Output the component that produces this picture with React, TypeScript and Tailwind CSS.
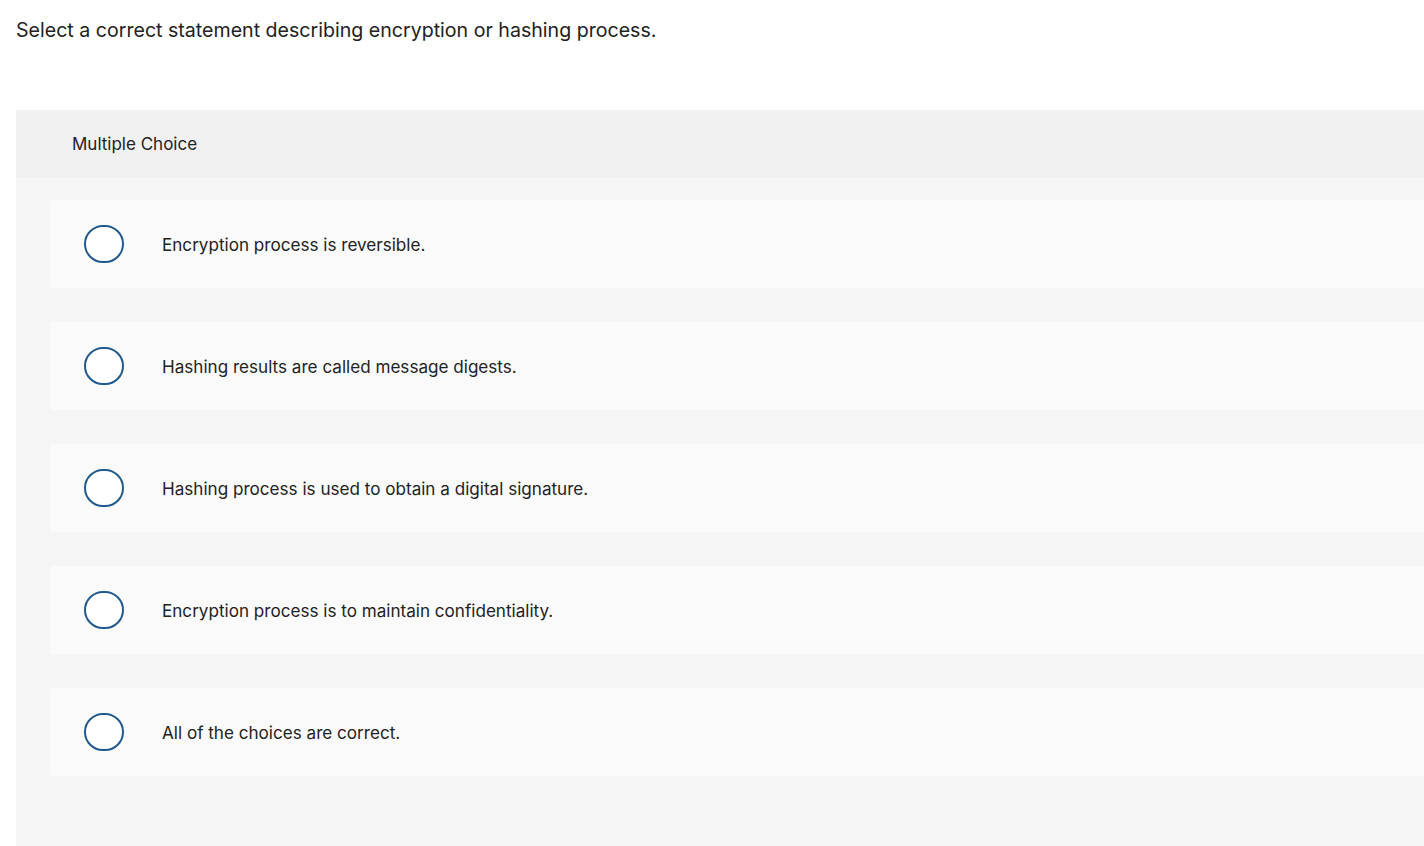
import React from "react";

const options = [
  "Encryption process is reversible.",
  "Hashing results are called message digests.",
  "Hashing process is used to obtain a digital signature.",
  "Encryption process is to maintain confidentiality.",
  "All of the choices are correct.",
];

export default function App() {
  return (
    <div
      className="w-[1424px] h-[846px] overflow-hidden bg-white text-[#222]"
      style={{ fontFamily: "Inter, Lato, sans-serif" }}
    >
      <div className="pl-4 pt-[17px] h-[110px]">
        <h1 className="text-[19.6px] leading-[26px] font-normal">
          Select a correct statement describing encryption or hashing process.
        </h1>
      </div>
      <div className="ml-4 w-[1460px] bg-[#f5f5f5] h-[800px]">
        <div className="h-[67px] bg-[#f1f1f1] flex items-center pl-[56px] pt-[2px] text-[17px]">
          Multiple Choice
        </div>
        <div className="flex flex-col gap-[34px] pt-[23px] pl-[34px]">
          {options.map((o) => (
            <div
              key={o}
              className="h-[88px] bg-[#fafafa] rounded-l-[4px] flex items-center"
            >
              <div className="ml-[34px] w-[40px] h-[38px] rounded-full border-2 border-[#1f5a8e] bg-white shrink-0" />
              <div className="ml-[38px] pt-[2px] text-[17.1px]">{o}</div>
            </div>
          ))}
        </div>
      </div>
    </div>
  );
}
